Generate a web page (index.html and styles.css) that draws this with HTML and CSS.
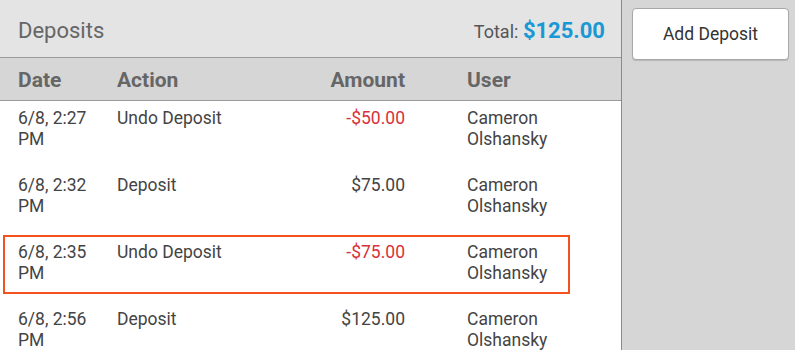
FILE: index.html
```html
<!DOCTYPE html>
<html lang="en">
<head>
    <meta charset="UTF-8">
    <meta name="viewport" content="width=device-width, initial-scale=1.0">
    <title>Deposits</title>
    <link rel="stylesheet" href="styles.css">
</head>
<body>
    <div class="layout">
        <div class="deposits">
            <div class="deposits-header">
                <span class="title">Deposits</span>
                <span class="total">Total: <strong>$125.00</strong></span>
            </div>

            <div class="row head">
                <div>Date</div>
                <div>Action</div>
                <div class="amount">Amount</div>
                <div class="user">User</div>
            </div>

            <div class="rows">
                <div class="row">
                    <div>6/8, 2:27<br>PM</div>
                    <div>Undo Deposit</div>
                    <div class="amount negative">-$50.00</div>
                    <div class="user">Cameron<br>Olshansky</div>
                </div>
                <div class="row">
                    <div>6/8, 2:32<br>PM</div>
                    <div>Deposit</div>
                    <div class="amount">$75.00</div>
                    <div class="user">Cameron<br>Olshansky</div>
                </div>
                <div class="row selected">
                    <div>6/8, 2:35<br>PM</div>
                    <div>Undo Deposit</div>
                    <div class="amount negative">-$75.00</div>
                    <div class="user">Cameron<br>Olshansky</div>
                </div>
                <div class="row">
                    <div>6/8, 2:56<br>PM</div>
                    <div>Deposit</div>
                    <div class="amount">$125.00</div>
                    <div class="user">Cameron<br>Olshansky</div>
                </div>
            </div>
        </div>

        <div class="sidebar">
            <button class="add-button">Add Deposit</button>
        </div>
    </div>
</body>
</html>
```

FILE: styles.css
```css
body {
    margin: 0;
    font-family: Roboto, "Liberation Sans", sans-serif;
    color: #444;
    background-color: #fff;
    overflow: hidden;
}

.layout {
    display: flex;
    height: 350px;
    overflow: hidden;
}

.deposits {
    width: 621px;
    border-right: 1px solid #8a8a8a;
    background-color: #fff;
}

.deposits-header {
    display: flex;
    justify-content: space-between;
    align-items: center;
    height: 54px;
    padding: 3px 16px 0 18px;
    background-color: #e4e4e4;
    border-bottom: 1px solid #9a9a9a;
}

.title {
    font-size: 22px;
    color: #666;
}

.total {
    font-size: 18px;
    color: #555;
}

.total strong {
    font-size: 22px;
    color: #1a98d5;
}

.row {
    display: grid;
    grid-template-columns: 99px 160px 128px 1fr;
    margin: 0 51px 8px 3px;
    padding: 5px 0 8px 13px;
    border: 2px solid transparent;
    font-size: 17.5px;
    line-height: 21px;
}

.row.head {
    margin: 0;
    padding: 11px 0 8px 18px;
    border: none;
    border-bottom: 1px solid #9a9a9a;
    background-color: #d6d6d6;
    font-size: 21px;
    font-weight: bold;
    line-height: 23px;
    color: #666;
}

.amount {
    text-align: right;
}

.user {
    padding-left: 62px;
}

.negative {
    color: #d8323a;
}

.row.selected {
    border-color: #f4511e;
}

.sidebar {
    flex: 1;
    background-color: #d6d6d6;
    padding: 8px 6px 0 10px;
}

.add-button {
    width: 157px;
    height: 52px;
    background: #fff;
    border: 1px solid #a8a8a8;
    border-radius: 4px;
    box-shadow: 0 1px 1px rgba(0, 0, 0, 0.15);
    font-family: Roboto, "Liberation Sans", sans-serif;
    font-size: 17.5px;
    color: #333;
}
```
